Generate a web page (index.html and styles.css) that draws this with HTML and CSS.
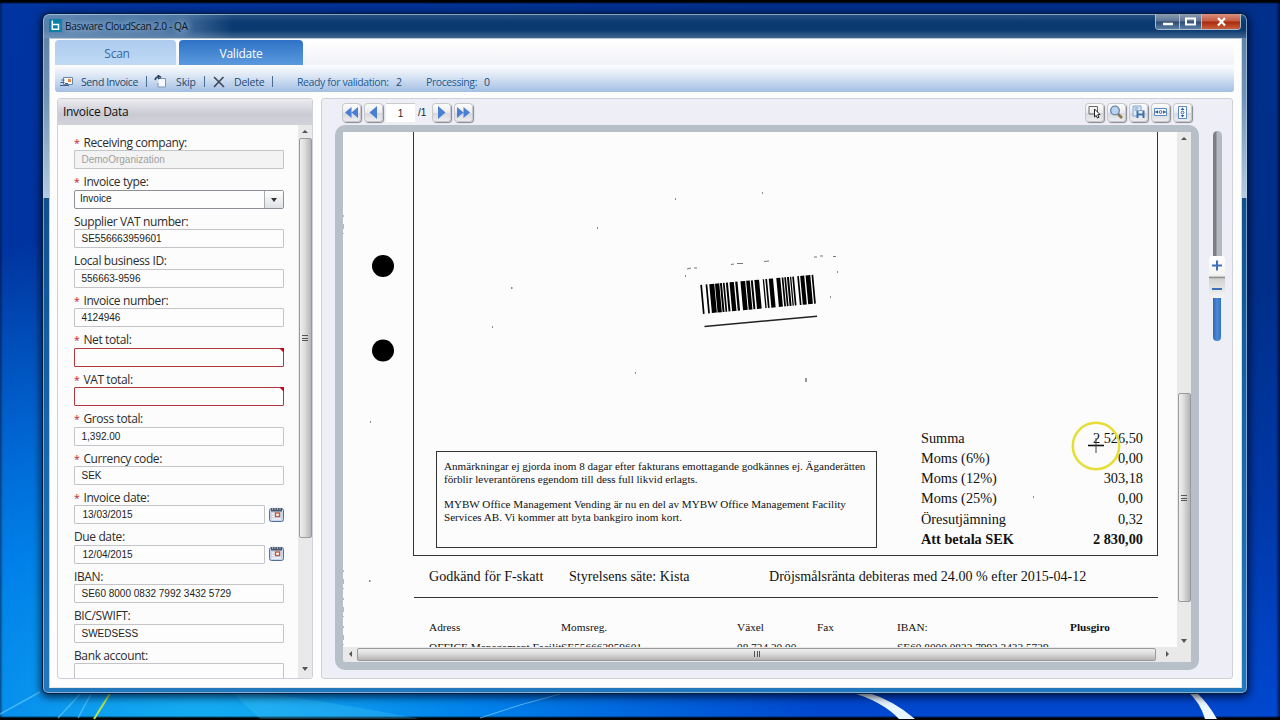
FILE: index.html
```html
<!DOCTYPE html>
<html lang="en">
<head>
<meta charset="UTF-8">
<title>Basware CloudScan 2.0 - QA</title>
<link rel="stylesheet" href="styles.css">
</head>
<body>
<svg class="wallpaper" width="1280" height="720" viewBox="0 0 1280 720">
  <path d="M58 718L82 692M78 718L92 692M0 714L40 692" stroke="#5cc8fa" stroke-width="1.5" opacity=".7"/>
  <path d="M94 719L111 692" stroke="#b4e64a" stroke-width="2"/>
  <path d="M232 692Q280 692 420 719H260z" fill="#4fd0f8" opacity=".25"/>
  <path d="M480 718Q520 704 560 694" stroke="#7fd0ff" fill="none" opacity=".7"/>
  <path d="M850 692Q882 701 899 719H915Q893 700 866 692z" fill="#e8f6ff"/>
  <path d="M1188 692Q1200 702 1205 719H1217Q1208 703 1196 692z" fill="#eef8ff"/>
</svg>

<div class="window">
  <div class="titlebar">
    <svg class="logo" width="13" height="13" viewBox="0 0 13 13"><rect width="13" height="13" fill="#0c7fa6"/><path d="M3.300 1.500v8.700h6.200V5.500H3.300" fill="none" stroke="#fff" stroke-width="1.500"/></svg>
    <span class="caption">Basware CloudScan 2.0 - QA</span>
    <div class="winbtns">
      <span class="min"><svg width="23" height="15"><path d="M7 10h10" stroke="#fff" stroke-width="2.500"/></svg></span>
      <span class="max"><svg width="21" height="15"><rect x="6" y="4.500" width="9" height="6" fill="none" stroke="#fff" stroke-width="2"/></svg></span>
      <span class="close"><svg width="38" height="15"><path d="M16 4l7 7.500m0-7.500l-7 7.500" stroke="#fff" stroke-width="2.200"/></svg></span>
    </div>
  </div>

  <div class="client">
    <div class="tabs">
      <div class="tab">Scan</div>
      <div class="tab active">Validate</div>
    </div>
    <div class="toolbar">
      <svg class="ico send" width="13" height="12" viewBox="0 0 13 12"><path d="M3.500 1.500h9v7h-9z" fill="#f4f7fb" stroke="#6d86a8"/><path d="M8 3h3v3H8z" fill="#e08a3c"/><path d="M5 7.500h3M1.500 4h3M.5 6.500h4M0 9.500h9" stroke="#3c5f8e"/></svg>
      <span class="cmd c-send">Send Invoice</span><i class="bar"></i>
      <svg class="ico skip" width="13" height="13" viewBox="0 0 13 13"><path d="M5 3.500h6.500v8.500H4v-4" fill="#f6f9fd" stroke="#7b93b5"/><path d="M1 5Q2 1.500 5 1.800M3.500 0L6.500 2 4 4" fill="none" stroke="#24405f" stroke-width="1.400"/></svg>
      <span class="cmd c-skip">Skip</span><i class="bar"></i>
      <svg class="ico del" width="12" height="12" viewBox="0 0 12 12"><path d="M1 1l10 10M10.500 1L1 11" stroke="#3c4654" stroke-width="1.600"/></svg>
      <span class="cmd c-del">Delete</span><i class="bar"></i>
      <span class="stat s1">Ready for validation:</span><span class="num n1">2</span>
      <span class="stat s2">Processing:</span><span class="num">0</span>
    </div>

    <div class="main">
      <div class="panel form">
        <div class="head">Invoice Data</div>
        <div class="formbody">
          <div class="fields">
            <div class="field req"><label>Receiving company:</label><div class="inp off">DemoOrganization</div></div>
            <div class="field req"><label>Invoice type:</label><div class="inp sel">Invoice<span class="drop"></span></div></div>
            <div class="field"><label>Supplier VAT number:</label><div class="inp">SE556663959601</div></div>
            <div class="field"><label>Local business ID:</label><div class="inp">556663-9596</div></div>
            <div class="field req"><label>Invoice number:</label><div class="inp">4124946</div></div>
            <div class="field req"><label>Net total:</label><div class="inp err"></div></div>
            <div class="field req"><label>VAT total:</label><div class="inp err"></div></div>
            <div class="field req"><label>Gross total:</label><div class="inp">1,392.00</div></div>
            <div class="field req"><label>Currency code:</label><div class="inp">SEK</div></div>
            <div class="field req"><label>Invoice date:</label><div class="daterow"><div class="inp">13/03/2015</div>
              <svg width="15" height="15" viewBox="0 0 15 15"><rect x=".5" y="1.500" width="14" height="13" rx="2" fill="#c9d6ea" stroke="#54709c"/><path d="M2 1h11v3.500H2z" fill="#4a5768"/><path d="M3.500 0v3M6 0v3M8.500 0v3M11 0v3" stroke="#cfd8e4" stroke-width=".7"/><path d="M3 7h3M3 9.500h3M3 12h9" stroke="#fff"/><rect x="6.500" y="6" width="4" height="3.500" fill="#fff" stroke="#c4552f" stroke-width="1.300"/></svg></div></div>
            <div class="field"><label>Due date:</label><div class="daterow"><div class="inp">12/04/2015</div>
              <svg width="15" height="15" viewBox="0 0 15 15"><rect x=".5" y="1.500" width="14" height="13" rx="2" fill="#c9d6ea" stroke="#54709c"/><path d="M2 1h11v3.500H2z" fill="#4a5768"/><path d="M3.500 0v3M6 0v3M8.500 0v3M11 0v3" stroke="#cfd8e4" stroke-width=".7"/><path d="M3 7h3M3 9.500h3M3 12h9" stroke="#fff"/><rect x="6.500" y="6" width="4" height="3.500" fill="#fff" stroke="#c4552f" stroke-width="1.300"/></svg></div></div>
            <div class="field"><label>IBAN:</label><div class="inp">SE60 8000 0832 7992 3432 5729</div></div>
            <div class="field"><label>BIC/SWIFT:</label><div class="inp">SWEDSESS</div></div>
            <div class="field"><label>Bank account:</label><div class="inp"></div></div>
          </div>
          <div class="vscroll">
            <b class="up"></b><div class="thumb"><i></i></div><b class="down"></b>
          </div>
        </div>
      </div>

      <div class="panel viewer">
        <div class="viewcol">
          <div class="pager">
            <span class="btn"><svg width="19" height="19"><path d="M9.500 4v11L3 9.500zM16 4v11L9.500 9.500z" fill="#4a7fd2"/></svg></span>
            <span class="btn"><svg width="19" height="19"><path d="M13 3v13L5.500 9.500z" fill="#4a7fd2"/></svg></span>
            <span class="pageno">1</span><span class="of">/1</span>
            <span class="btn"><svg width="19" height="19"><path d="M6 3v13l7.500-6.500z" fill="#4a7fd2"/></svg></span>
            <span class="btn"><svg width="19" height="19"><path d="M3 4v11l6.500-5.500zM9.500 4v11L16 9.500z" fill="#4a7fd2"/></svg></span>
            <span class="gap"></span>
            <span class="btn"><svg width="19" height="19"><path d="M4 3.500h8.500v7.500H4z" fill="none" stroke="#666"/><path d="M9.500 6l5.500 5.500-2.300.2 1.200 2.600-1.500.7-1.200-2.600-1.700 1.600z" fill="#fff" stroke="#222"/></svg></span>
            <span class="btn"><svg width="19" height="19"><path d="M11 11l4 4" stroke="#8a7a4e" stroke-width="2.600"/><circle cx="8" cy="7.500" r="4.300" fill="#b9d3ef" stroke="#6383ab" stroke-width="1.300"/></svg></span>
            <span class="btn"><svg width="19" height="19"><path d="M4 3h8v10H4z" fill="#e3edf8" stroke="#7fa3cf"/><path d="M5.500 5h4M5.500 7h3" stroke="#6f97c9"/><path d="M7.500 7.500h8v7.500h-8z" fill="#3d6fae"/><path d="M9.500 8h4v2.500h-4zM9.500 12.500h4V15h-4z" fill="#e9f1fa"/></svg></span>
            <span class="btn"><svg width="19" height="19"><path d="M3.500 5.500h12v7h-12z" fill="#fff" stroke="#5b88c4"/><path d="M4 9h3M12 9h3" stroke="#2e62a8" stroke-width="1.200"/><path d="M7 7v4L4.500 9zM12 7v4l2.500-2z" fill="#2e62a8"/><circle cx="9.500" cy="9" r="1.400" fill="none" stroke="#2e62a8"/></svg></span>
            <span class="btn"><svg width="19" height="19"><path d="M5.500 3.500h8v12h-8z" fill="#fff" stroke="#5b88c4"/><path d="M7.500 7h4L9.500 4.500zM7.500 12h4l-2 2.500z" fill="#2e62a8"/><circle cx="9.500" cy="9.500" r="1.400" fill="none" stroke="#2e62a8"/></svg></span>
          </div>

          <div class="docframe">
            <div class="sheet">
              <svg class="marks" width="834" height="515" viewBox="343 132 834 515">
                <g fill="#000"><circle cx="383" cy="266" r="11"/><circle cx="383" cy="350.500" r="11"/></g>
                <g transform="translate(700.300 285) rotate(-5.200)">
                  <path d="M0 0h1.700v29H0zM5.300 0h1.700v29H5.300zM9 0h5v29H9zM14.700 0h4.300v29h-4.300zM19.700 0h2v29h-2zM22.700 0h1.700v29h-1.700zM25.700 0h2v29h-2zM29.300 0h4.400v29h-4.400zM35 0h2.300v29H35zM40.300 0H45v29h-4.700zM46 0h3.700v29H46zM50.700 0h2v29h-2zM54.300 0H59v29h-4.700zM62.700 0H64v29h-1.300zM65.300 0H67v29h-1.700zM68.700 0H73v29h-4.300zM76.300 0h4v29h-4zM81.700 0h1.700v29h-1.700zM84.300 0H86v29h-1.700zM87 0h2v29h-2zM90 0h1.300v29H90zM92.300 0H94v29h-1.700zM97.300 0H99v29h-1.700zM100.300 0h4v29h-4zM105.700 0h4.700v29h-4.700zM111.700 0h1.700v29h-1.700z"/>
                </g>
                <path d="M704.500 326.500L817 316.300" stroke="#222" stroke-width="1.500"/>
                <path d="M687 269l4-1M694 268h3M731 264.500l3-.5M737 263.500h6M764 261.500l5-.5M814 257h3M820 256h3M833 256.500h3" stroke="#777"/>
                <path d="M685 276h1M830 297h1M837 272h1M511 288h1.500M597 228h1M762 193h1M675 199h1M635 373h1M492 327h1M1033 497h1M369 581h1.500M370 422h1" stroke="#666" stroke-width="1.300"/>
                <path d="M806 378v4" stroke="#333"/>
                <path d="M343.500 215v20M343.500 570v75" stroke="#b4bbc3" stroke-dasharray="2 7 5 4 1 9"/>
              </svg>
              <div class="bill">
                <div class="notes">
                  <p class="l1">Anmärkningar ej gjorda inom 8 dagar efter fakturans emottagande godkännes ej. Äganderätten</p>
                  <p class="l2">förblir leverantörens egendom till dess full likvid erlagts.</p>
                  <p class="l3">MYBW Office Management Vending är nu en del av MYBW Office Management Facility</p>
                  <p class="l4">Services AB. Vi kommer att byta bankgiro inom kort.</p>
                </div>
                <div class="totals">
                  <span>Summa</span><span>2 526,50</span>
                  <span>Moms (6%)</span><span>0,00</span>
                  <span>Moms (12%)</span><span>303,18</span>
                  <span>Moms (25%)</span><span>0,00</span>
                  <span>Öresutjämning</span><span>0,32</span>
                  <b>Att betala SEK</b><b>2 830,00</b>
                </div>
              </div>
              <div class="terms"><span>Godkänd för F-skatt</span><span>Styrelsens säte: Kista</span><span>Dröjsmålsränta debiteras med 24.00 % efter 2015-04-12</span></div>
              <div class="foot">
                <span>Adress</span><span>Momsreg.</span><span>Växel</span><span>Fax</span><span>IBAN:</span><b>Plusgiro</b>
                <span>OFFICE Management Facilit</span><span>SE556663959601</span><span>08 734 30 00</span><span></span><span>SE60 8000 0832 7992 3432 5729</span>
              </div>
            </div>
            <div class="vscroll">
              <b class="up"></b><div class="thumb"><i></i></div><b class="down"></b>
            </div>
            <div class="hscroll"><b class="left"></b><div class="hthumb"><i></i></div><b class="right"></b></div>
          </div>
        </div>

        <div class="zoomer">
          <div class="track"></div>
          <div class="knob"><svg width="16" height="42"><path d="M3 9.500h10M8 4.500v10M3 33h10" stroke="#3b70b8" stroke-width="2"/><path d="M0 21.500h16" stroke="#8f8f8f" stroke-width="1.500"/></svg></div>
          <div class="level"></div>
        </div>
      </div>
    </div>
  </div>
</div>

<svg class="pointer" width="52" height="52" viewBox="0 0 52 52"><circle cx="26" cy="26" r="23.200" fill="none" stroke="#e6de35" stroke-width="2.500"/><path d="M18 25.500h16" stroke="#111" stroke-width="1.600"/><path d="M26 18v15" stroke="#444"/></svg>
</body>
</html>
```

FILE: styles.css
```css
* { box-sizing: border-box; }
body {
  margin: 0;
  width: 1280px;
  height: 720px;
  overflow: hidden;
  padding: 14px 33px 0 43px;
  background:
    linear-gradient(#000 2px, transparent 4px, transparent 716px, #000 718px),
    linear-gradient(90deg, rgba(0,10,40,.5), transparent 3px, transparent 1276px, rgba(0,0,20,.7)),
    radial-gradient(ellipse 620px 520px at 200px 740px, #16b0f2 0, rgba(0,140,240,.85) 45%, transparent),
    linear-gradient(90deg, rgba(0,60,200,.35), transparent 60%),
    linear-gradient(#00308c, #002f8a 40%, #0038a8 70%, #0048d0);
  font-family: "Open Sans", "Noto Sans", sans-serif;
}
.wallpaper { position: absolute; left: 0; top: 0; }
p { margin: 0; }

/* window frame */
.window {
  position: relative;
  width: 1204px;
  height: 679px;
  padding: 0 5px 5px 6px;
  border-radius: 6px 6px 5px 5px;
  background:
    linear-gradient(90deg, rgba(150,185,220,.55), rgba(130,165,205,.45) 140px, transparent 190px) 0 0 / 100% 24px no-repeat,
    linear-gradient(#2b5583, #0a3a72 8px, #0b3a70 16px, #41658f 24px) 0 0 / 100% 24px no-repeat,
    linear-gradient(#5c7d9f, #6f92b6 80px, #b4cbe0 184px, #11508f 184px, #1565ab 60%, #2378bd);
  box-shadow: inset 0 0 0 1px rgba(190,215,240,.6), 0 0 0 1px #07203f, 0 2px 9px 2px rgba(0,0,20,.75);
}
.titlebar { height: 24px; display: flex; align-items: flex-start; }
.logo { margin: 5px 3px 0 0; }
.caption {
  margin-top: 3px;
  line-height: 18px;
  font-size: 10.200px;
  letter-spacing: -.4px;
  color: #0b1726;
  text-shadow: 0 0 6px #b9d2ea, 0 0 8px #a9c6e2;
}
.winbtns {
  display: flex;
  margin: 0 1px 0 auto;
  border: 1px solid #aebccc;
  border-top: 0;
  border-radius: 0 0 4px 4px;
  overflow: hidden;
}
.winbtns span { height: 15px; background: linear-gradient(#8d9db2, #5c7492 48%, #2c4a70 52%, #5c7fa5); }
.winbtns svg { display: block; }
.winbtns .max { border: solid #aebccc; border-width: 0 1px; }
.winbtns .close { background: linear-gradient(#d9907e, #c55a40 48%, #a8280c 52%, #c8603c); }

.client {
  height: 650px;
  padding: 1px 7px 0 5px;
  border: 1px solid #fff;
  border-color: #b9c6d4 #d8dde4 #e4e8ec #c4ccd6;
  background: #fdfdfe;
}
.tabs {
  display: flex;
  gap: 3px;
  height: 25px;
  background: linear-gradient(#fff, #f1f2f8);
  font-size: 12px;
  line-height: 27px;
  letter-spacing: -.25px;
  text-align: center;
}
.tab {
  width: 121px;
  padding-left: 3px;
  border-radius: 4px 4px 0 0;
  color: #37689e;
  background: linear-gradient(#aecbee, #c0daf5);
}
.tab.active { width: 124px; padding: 0; color: #fff; background: linear-gradient(#2f73c6, #5a99de); }

/* toolbar */
.toolbar {
  display: flex;
  align-items: center;
  height: 27px;
  padding: 6px 0 0 5px;
  border-radius: 0 0 3px 3px;
  background: linear-gradient(#fcfdff, #dce7f5 40%, #a3bfe4);
  color: #24496f;
  font-size: 10.500px;
  letter-spacing: -.4px;
  white-space: nowrap;
}
.ico { flex: none; }
.cmd, .stat, .num { flex: none; }
.bar { width: 1px; height: 11px; background: #4d6c92; flex: none; }
.c-send { width: 65px; margin-left: 8px; }
.skip { margin-left: 7px; }
.c-skip { width: 28px; margin-left: 9px; letter-spacing: -.1px; }
.del { margin-left: 8px; }
.c-del { width: 38px; margin-left: 9px; letter-spacing: -.2px; }
.stat { color: #1d5b90; }
.s1 { width: 99px; margin-left: 24px; }
.n1 { width: 30px; }
.s2 { width: 58px; }

.main { display: flex; gap: 8px; padding: 6px 0 0 2px; }
.panel { height: 581px; border: 1px solid #cfd1d8; border-radius: 3px; }
.form { width: 256px; background: #fcfcfc; overflow: hidden; }
.head {
  height: 26px;
  padding-left: 5px;
  font-size: 12px;
  line-height: 25px;
  letter-spacing: -.3px;
  color: #111;
  background: linear-gradient(#ececf0, #c9cad3 60%, #d2d3da);
}
.formbody { display: flex; justify-content: space-between; height: 553px; }
.fields { padding: 5px 0 0 16px; width: 226px; overflow: hidden; }
.field { height: 39.450px; }
.field label {
  display: block;
  height: 20.450px;
  padding-top: 4px;
  font-size: 12px;
  line-height: 17px;
  letter-spacing: -.38px;
  color: #2c2c2c;
  white-space: nowrap;
}
.req label::before { content: "*"; color: #c8202c; font-size: 10.500px; margin-right: 4px; }
.inp {
  position: relative;
  width: 210px;
  height: 19px;
  padding-left: 6.500px;
  border: 1px solid #c2c4c8;
  border-radius: 1px;
  background: #fdfdfd;
  font: 10px/18px "Liberation Sans", Arial, sans-serif;
  color: #222;
}
.off { background: #f3f3f3; color: #a0a0a0; }
.sel { display: flex; justify-content: space-between; padding-left: 5px; line-height: 16px; border-color: #8d9096; border-radius: 2px; }
.drop { width: 19px; border-left: 1px solid #a9acb2; background: linear-gradient(#fff, #dfe1e5); }
.drop::after {
  content: "";
  display: block;
  margin: 7px 0 0 6px;
  width: 0;
  border: solid transparent;
  border-width: 4px 3.500px 0;
  border-top-color: #333;
}
.err { border-color: #b3363d; }
.err::after {
  content: "";
  position: absolute;
  right: -1px;
  top: -1px;
  border: solid transparent;
  border-width: 0 5px 5px 0;
  border-right-color: #c00d1e;
}
.daterow { display: flex; align-items: center; gap: 4px; }
.daterow .inp { width: 191px; padding-left: 7.500px; line-height: 17px; }
.daterow svg { margin-top: -1px; }

/* scrollbars */
.vscroll { width: 14px; display: flex; flex-direction: column; align-items: center; background: #e9e9ea; }
.vscroll b, .hscroll b { width: 0; height: 0; border: 3px solid transparent; flex: none; }
.vscroll .up { border-width: 0 3px 3px; border-bottom-color: #555; margin: 5px 0; }
.vscroll .down { border-width: 4px 3px 0; border-top-color: #555; margin: auto 0 7px; }
.thumb {
  width: 13px;
  height: 400px;
  border: 1px solid #9a9a9c;
  border-radius: 2px;
  background: linear-gradient(90deg, #f0f0f0, #dedede 40%, #b4b4b6);
  display: flex;
  align-items: center;
  justify-content: center;
}
.thumb i { width: 6px; height: 6px; background: repeating-linear-gradient(#555 0 1px, transparent 1px 2.500px); }

/* viewer */
.viewer { display: flex; width: 912px; padding-left: 13px; background: #eeeff6; }
.pager { display: flex; align-items: center; gap: 3px; height: 26px; padding: 0 7px; }
.btn {
  width: 19px;
  height: 19px;
  border-radius: 4px;
  background: linear-gradient(#fff, #ececef 50%, #d6d8dd 52%, #f0f0f2);
  box-shadow: inset 0 0 0 1px #c6c8ce, 1px 1px 1px #85878c;
}
.btn svg { display: block; }
.pageno, .of { font: 10px/19px "Liberation Sans", Arial, sans-serif; color: #222; }
.pageno { width: 29px; height: 19px; background: #fff; text-align: center; border-top: 1px solid #c9cad0; }
.of { width: 11px; }
.gap { flex: 1; }
.docframe {
  display: grid;
  grid-template-columns: 834px 14px;
  grid-template-rows: 515px 14px;
  width: 864px;
  height: 545px;
  border: 8px solid #b7bfc9;
  border-top-width: 7px;
  border-radius: 10px;
  background: #e9e9ea;
}
.docframe .vscroll { height: 530px; grid-row: 1 / 3; grid-column: 2; }
.docframe .thumb { height: 209px; margin-top: 248px; }
.docframe .down { margin-bottom: 19px; }
.hscroll { display: flex; align-items: center; grid-row: 2; grid-column: 1; }
.hscroll .left { border-width: 3px 3px 3px 0; border-right-color: #555; margin: 0 5px 0 6px; }
.hscroll .right { border-width: 3px 0 3px 3px; border-left-color: #555; margin-left: 10px; }
.hthumb {
  width: 799px;
  height: 13px;
  border: 1px solid #9a9a9c;
  border-radius: 2px;
  background: linear-gradient(#f0f0f0, #dedede 40%, #b4b4b6);
  display: flex;
  align-items: center;
  justify-content: center;
}
.hthumb i { width: 6px; height: 6px; background: repeating-linear-gradient(90deg, #555 0 1px, transparent 1px 2.500px); }

/* scanned page */
.sheet {
  position: relative;
  height: 515px;
  overflow: hidden;
  background: #fcfcfc;
  color: #111;
  font-family: "Liberation Serif", "Times New Roman", serif;
  white-space: nowrap;
}
.marks { position: absolute; left: 0; top: 0; }
.bill {
  display: flex;
  align-items: flex-end;
  justify-content: space-between;
  width: 745px;
  height: 424px;
  margin-left: 70px;
  padding: 0 14px 0 22px;
  border: solid #333;
  border-width: 0 1px 1px;
}
.notes {
  width: 441px;
  height: 97px;
  margin-bottom: 7px;
  padding: 8px 0 0 7px;
  border: 1px solid #333;
  font-size: 11.120px;
  line-height: 13px;
}
.notes .l3 { margin-top: 12px; }
.totals {
  display: grid;
  grid-template-columns: 1fr auto;
  grid-auto-rows: 20.250px;
  width: 222px;
  margin-bottom: 6px;
  font-size: 14.300px;
  line-height: 20px;
}
.totals :nth-child(even) { text-align: right; }
.terms {
  display: grid;
  grid-template-columns: 140px 200px auto;
  width: 744px;
  height: 42px;
  margin-left: 71px;
  padding-left: 15px;
  border-bottom: 1.500px solid #333;
  font-size: 14.100px;
  line-height: 40px;
}
.foot {
  display: grid;
  grid-template-columns: 132px 176px 80px 80px 173px auto;
  grid-auto-rows: 20px;
  margin: 19px 0 0 86px;
  font-size: 11.300px;
  line-height: 20px;
}

/* zoom slider */
.zoomer { display: flex; flex-direction: column; align-items: center; width: 16px; margin: 32px 0 0 10px; }
.track { width: 9px; height: 125px; border-radius: 5px 5px 0 0; background: linear-gradient(90deg, #7c8086 0 3px, #b4bac2 4px); }
.knob { height: 42px; border-radius: 4px; background: linear-gradient(#fff, #f4f4f4 45%, #cfcfd0 52%, #f6f6f6); }
.knob svg { display: block; }
.level { width: 8px; height: 43px; border-radius: 0 0 4px 4px; background: linear-gradient(90deg, #2c67b8, #4b8ad8 50%, #3473c4); }

.pointer { position: absolute; left: 1070px; top: 420px; }
```
